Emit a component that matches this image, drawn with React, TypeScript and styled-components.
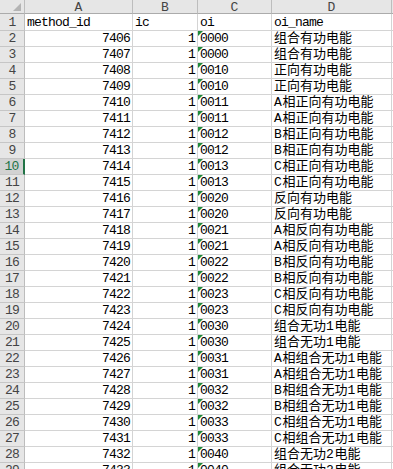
import React from "react";
import styled, { createGlobalStyle, css } from "styled-components";

const GlobalStyle = createGlobalStyle`
    html, body {
        margin: 0;
        padding: 0;
        background: #ffffff;
        overflow: hidden;
    }
`;

const FONT = `"Liberation Mono", "Noto Sans CJK SC", monospace`;

const Sheet = styled.div`
    display: grid;
    grid-template-columns: 25px 108px 65px 74px 120px 1fr;
    grid-template-rows: 14px 17px;
    grid-auto-rows: 16px;
    width: 393px;
    height: 469px;
    overflow: hidden;
    font-family: ${FONT};
    font-size: 13px;
    color: #000;
`;

const Corner = styled.div`
    position: relative;
    background: #e6e6e6;
    border-right: 1px solid #bdbdbd;
    border-bottom: 1px solid #ababab;
    box-sizing: border-box;
    &::after {
        content: "";
        position: absolute;
        right: 3px;
        bottom: 2px;
        width: 0;
        height: 0;
        border-left: 8px solid transparent;
        border-bottom: 8px solid #b4b4b4;
    }
`;

const ColHeader = styled.div`
    display: flex;
    align-items: center;
    justify-content: center;
    background: #e6e6e6;
    border-right: 1px solid #bdbdbd;
    border-bottom: 1px solid #ababab;
    box-sizing: border-box;
    color: #444;
    font-size: 13px;
    line-height: 13px;
    padding-top: 1px;
`;

const RowHeader = styled.div<{ $active?: boolean }>`
    display: flex;
    align-items: center;
    justify-content: center;
    background: #e6e6e6;
    border-right: 1px solid #bdbdbd;
    border-bottom: 1px solid #c6c6c6;
    box-sizing: border-box;
    color: #444;
    letter-spacing: -0.8px;
    ${(p) =>
        p.$active &&
        css`
            background: #d2d2d2;
            color: #217346;
            border-right: 2px solid #217346;
        `}
`;

const Cell = styled.div<{ $right?: boolean; $flag?: boolean }>`
    position: relative;
    display: flex;
    align-items: flex-end;
    justify-content: ${(p) => (p.$right ? "flex-end" : "flex-start")};
    padding: 0 2px 0 2px;
    border-right: 1px solid #d4d4d4;
    border-bottom: 1px solid #d4d4d4;
    box-sizing: border-box;
    ${(p) =>
        p.$flag &&
        css`
            &::before {
                content: "";
                position: absolute;
                left: 0;
                top: 0;
                width: 0;
                height: 0;
                border-top: 5px solid #1f8a3a;
                border-right: 5px solid transparent;
            }
        `}
`;

const CellText = styled.span`
    display: block;
    white-space: nowrap;
    line-height: 15px;
    letter-spacing: -0.8px;
`;

const Han = styled.span<{ $gap?: boolean }>`
    font-family: "Noto Sans CJK SC", sans-serif;
    font-size: 13px;
    letter-spacing: 0;
    padding-left: ${(p) => (p.$gap ? "1.5px" : "0")};
`;

const rows: [number, string, string][] = [
    [7406, "0000", "组合有功电能"],
    [7407, "0000", "组合有功电能"],
    [7408, "0010", "正向有功电能"],
    [7409, "0010", "正向有功电能"],
    [7410, "0011", "A相正向有功电能"],
    [7411, "0011", "A相正向有功电能"],
    [7412, "0012", "B相正向有功电能"],
    [7413, "0012", "B相正向有功电能"],
    [7414, "0013", "C相正向有功电能"],
    [7415, "0013", "C相正向有功电能"],
    [7416, "0020", "反向有功电能"],
    [7417, "0020", "反向有功电能"],
    [7418, "0021", "A相反向有功电能"],
    [7419, "0021", "A相反向有功电能"],
    [7420, "0022", "B相反向有功电能"],
    [7421, "0022", "B相反向有功电能"],
    [7422, "0023", "C相反向有功电能"],
    [7423, "0023", "C相反向有功电能"],
    [7424, "0030", "组合无功1电能"],
    [7425, "0030", "组合无功1电能"],
    [7426, "0031", "A相组合无功1电能"],
    [7427, "0031", "A相组合无功1电能"],
    [7428, "0032", "B相组合无功1电能"],
    [7429, "0032", "B相组合无功1电能"],
    [7430, "0033", "C相组合无功1电能"],
    [7431, "0033", "C相组合无功1电能"],
    [7432, "0040", "组合无功2电能"],
    [7433, "0040", "组合无功2电能"],
];

// split latin / han runs so the han glyphs can get their own font
function mixed(text: string) {
    const parts = text.match(/[\x00-\x7f]+|[^\x00-\x7f]+/g) || [];
    return parts.map((p, i) =>
        /^[\x00-\x7f]/.test(p) ? p : (
            <Han key={i} $gap={i > 0}>
                {p}
            </Han>
        )
    );
}

const ACTIVE_ROW = 10;

export default function App() {
    return (
        <>
            <GlobalStyle />
            <Sheet>
                <Corner />
                {["A", "B", "C", "D"].map((c) => (
                    <ColHeader key={c}>{c}</ColHeader>
                ))}
                <ColHeader />

                <RowHeader>1</RowHeader>
                <Cell><CellText>method_id</CellText></Cell>
                <Cell><CellText>ic</CellText></Cell>
                <Cell><CellText>oi</CellText></Cell>
                <Cell><CellText>oi_name</CellText></Cell>
                <Cell />

                {rows.map(([id, oi, name], i) => {
                    const n = i + 2;
                    return (
                        <React.Fragment key={n}>
                            <RowHeader $active={n === ACTIVE_ROW}>{n}</RowHeader>
                            <Cell $right><CellText>{id}</CellText></Cell>
                            <Cell $right><CellText>1</CellText></Cell>
                            <Cell $flag><CellText>{oi}</CellText></Cell>
                            <Cell><CellText>{mixed(name)}</CellText></Cell>
                            <Cell />
                        </React.Fragment>
                    );
                })}
            </Sheet>
        </>
    );
}
